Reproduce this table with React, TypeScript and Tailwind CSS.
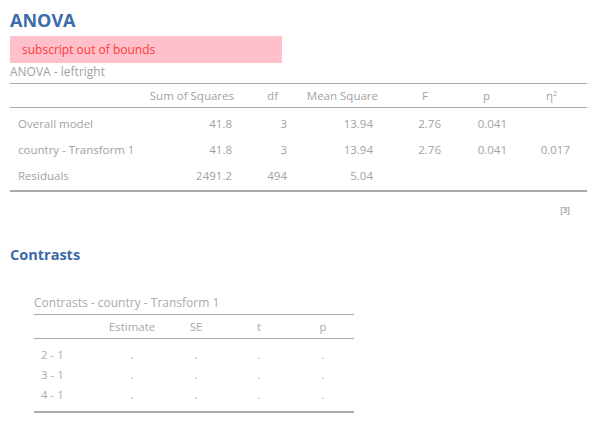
const font = { fontFamily: '"Open Sans", "Noto Sans", sans-serif' };

const anovaRows = [
  ["Overall model", "41.8", "3", "13.94", "2.76", "0.041", ""],
  ["country - Transform 1", "41.8", "3", "13.94", "2.76", "0.041", "0.017"],
  ["Residuals", "2491.2", "494", "5.04", "", "", ""],
];

// column widths and right paddings for headers / values
const cols = [
  { w: "w-[136px]", head: "", hp: "", vp: "" },
  { w: "w-[94px]", head: "Sum of Squares", hp: "pr-[6px]", vp: "pr-[8px]" },
  { w: "w-[55px]", head: "df", hp: "pr-[17px]", vp: "pr-[8px]" },
  { w: "w-[86px]", head: "Mean Square", hp: "pr-[3px]", vp: "pr-[8px]" },
  { w: "w-[68px]", head: "F", hp: "pr-[21px]", vp: "pr-[8px]" },
  { w: "w-[66px]", head: "p", hp: "pr-[25px]", vp: "pr-[8px]" },
  { w: "w-[72px]", head: "η²", hp: "pr-[30px]", vp: "pr-[17px]" },
];

function AnovaTable() {
  return (
    <div className="w-[577px] text-[11.5px] text-[#a2a2a2]">
      <div className="text-[12px] leading-[18px]">ANOVA - leftright</div>
      <div className="mt-[2px] border-t border-[#aaaaaa]">
        <div className="flex h-[24px] items-center border-b border-[#aaaaaa]">
          {cols.map((c, i) => (
            <div key={i} className={`${c.w} ${c.hp} text-right`}>
              {c.head === "η²" ? (
                <span>
                  η<sup className="text-[7px]">2</sup>
                </span>
              ) : (
                c.head
              )}
            </div>
          ))}
        </div>
        <div className="pt-[3px] pb-[1px]">
          {anovaRows.map((r, ri) => (
            <div key={ri} className="flex h-[26px] items-center">
              {r.map((v, i) => (
                <div
                  key={i}
                  className={`${cols[i].w} ${i === 0 ? "pl-[8px] text-left" : `${cols[i].vp} text-right`}`}
                >
                  {v}
                </div>
              ))}
            </div>
          ))}
        </div>
        <div className="h-[2px] bg-[#aaaaaa]" />
      </div>
      <div className="flex justify-end pr-[17px] pt-[12px] text-[8px] font-bold text-[#aaaaaa]">[3]</div>
    </div>
  );
}

const contrastRows = ["2 - 1", "3 - 1", "4 - 1"];
const ccols = [
  { w: "w-[52px]", head: "" },
  { w: "w-[92px]", head: "Estimate" },
  { w: "w-[36px]", head: "SE" },
  { w: "w-[90px]", head: "t" },
  { w: "w-[38px]", head: "p" },
];

function ContrastTable() {
  return (
    <div className="ml-[24px] w-[320px] text-[11.5px] text-[#aaaaaa]">
      <div className="text-[12px] leading-[18px]">Contrasts - country - Transform 1</div>
      <div className="mt-[2px] border-t border-[#aaaaaa]">
        <div className="flex h-[24px] items-center border-b border-[#aaaaaa]">
          {ccols.map((c, i) => (
            <div key={i} className={`${c.w} text-center`}>
              {c.head}
            </div>
          ))}
        </div>
        <div className="pt-[6px] pb-[6px]">
          {contrastRows.map((r) => (
            <div key={r} className="flex h-[20px] items-center">
              <div className={`${ccols[0].w} pl-[7px]`}>{r}</div>
              {ccols.slice(1).map((c, i) => (
                <div key={i} className={`${c.w} text-center`}>
                  .
                </div>
              ))}
            </div>
          ))}
        </div>
        <div className="h-[2px] bg-[#aaaaaa]" />
      </div>
    </div>
  );
}

export default function App() {
  return (
    <div className="h-[421px] w-[603px] overflow-hidden bg-white px-[10px] pt-[8px]" style={font}>
      <h1 className="text-[18px] font-bold leading-[24px] text-[#3b6ba8]">ANOVA</h1>
      <div className="mt-[4px] flex h-[27px] w-[272px] items-center bg-[#ffc0cb] pl-[12px] text-[12px] text-[#ff3a3a]">
        subscript out of bounds
      </div>
      <AnovaTable />
      <h2 className="mt-[29px] text-[14.5px] font-bold leading-[20px] text-[#3b6ba8]">Contrasts</h2>
      <div className="mt-[29px]">
        <ContrastTable />
      </div>
    </div>
  );
}
